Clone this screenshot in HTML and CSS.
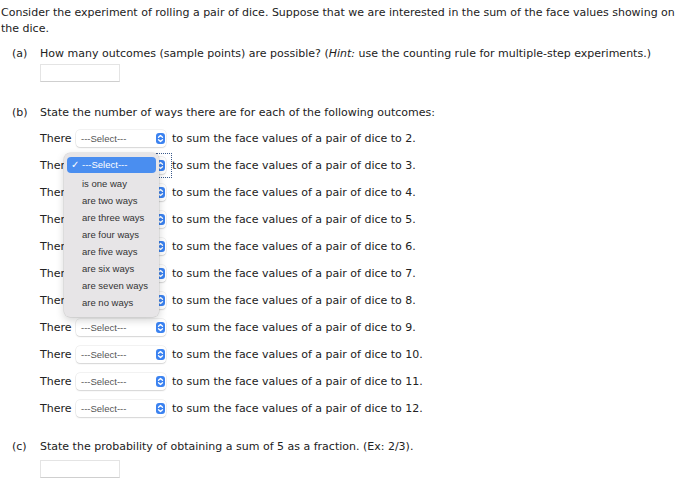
FILE: index.html
```html
<!DOCTYPE html>
<html>
<head>
<meta charset="utf-8">
<link rel="stylesheet" href="styles.css">
</head>
<body>
<div class="page">
  <p class="intro">Consider the experiment of rolling a pair of dice. Suppose that we are interested in the sum of the face values showing on the dice.</p>

  <div class="part part-a">
    <span class="label">(a)</span>
    <div class="body">
      <p class="q">How many outcomes (sample points) are possible? (<i>Hint:</i> use the counting rule for multiple-step experiments.)</p>
      <div class="answer"></div>
    </div>
  </div>

  <div class="part part-b">
    <span class="label">(b)</span>
    <div class="body">
      <p class="q">State the number of ways there are for each of the following outcomes:</p>
      <div class="rows">
        <div class="row"><span class="there">There</span><span class="select"><span class="sel-text">---Select---</span><span class="stepper"><svg viewBox="0 0 9 11" width="9" height="11"><path d="M2.5 4.2 4.5 2.4 6.5 4.2M2.5 6.8 4.5 8.6 6.5 6.8" fill="none" stroke="#fff" stroke-width="1.3" stroke-linecap="round" stroke-linejoin="round"/></svg></span></span><span class="txt">to sum the face values of a pair of dice to 2.</span></div>
        <div class="row"><span class="there">There</span><span class="select focused"><span class="sel-text">---Select---</span><span class="stepper"><svg viewBox="0 0 9 11" width="9" height="11"><path d="M2.5 4.2 4.5 2.4 6.5 4.2M2.5 6.8 4.5 8.6 6.5 6.8" fill="none" stroke="#fff" stroke-width="1.3" stroke-linecap="round" stroke-linejoin="round"/></svg></span><span class="focus-ring"></span>
          <span class="menu">
            <span class="item active"><span class="check">✓</span>---Select---</span>
            <span class="item">is one way</span>
            <span class="item">are two ways</span>
            <span class="item">are three ways</span>
            <span class="item">are four ways</span>
            <span class="item">are five ways</span>
            <span class="item">are six ways</span>
            <span class="item">are seven ways</span>
            <span class="item">are no ways</span>
          </span></span><span class="txt">to sum the face values of a pair of dice to 3.</span></div>
        <div class="row"><span class="there">There</span><span class="select"><span class="sel-text">---Select---</span><span class="stepper"><svg viewBox="0 0 9 11" width="9" height="11"><path d="M2.5 4.2 4.5 2.4 6.5 4.2M2.5 6.8 4.5 8.6 6.5 6.8" fill="none" stroke="#fff" stroke-width="1.3" stroke-linecap="round" stroke-linejoin="round"/></svg></span></span><span class="txt">to sum the face values of a pair of dice to 4.</span></div>
        <div class="row"><span class="there">There</span><span class="select"><span class="sel-text">---Select---</span><span class="stepper"><svg viewBox="0 0 9 11" width="9" height="11"><path d="M2.5 4.2 4.5 2.4 6.5 4.2M2.5 6.8 4.5 8.6 6.5 6.8" fill="none" stroke="#fff" stroke-width="1.3" stroke-linecap="round" stroke-linejoin="round"/></svg></span></span><span class="txt">to sum the face values of a pair of dice to 5.</span></div>
        <div class="row"><span class="there">There</span><span class="select"><span class="sel-text">---Select---</span><span class="stepper"><svg viewBox="0 0 9 11" width="9" height="11"><path d="M2.5 4.2 4.5 2.4 6.5 4.2M2.5 6.8 4.5 8.6 6.5 6.8" fill="none" stroke="#fff" stroke-width="1.3" stroke-linecap="round" stroke-linejoin="round"/></svg></span></span><span class="txt">to sum the face values of a pair of dice to 6.</span></div>
        <div class="row"><span class="there">There</span><span class="select"><span class="sel-text">---Select---</span><span class="stepper"><svg viewBox="0 0 9 11" width="9" height="11"><path d="M2.5 4.2 4.5 2.4 6.5 4.2M2.5 6.8 4.5 8.6 6.5 6.8" fill="none" stroke="#fff" stroke-width="1.3" stroke-linecap="round" stroke-linejoin="round"/></svg></span></span><span class="txt">to sum the face values of a pair of dice to 7.</span></div>
        <div class="row"><span class="there">There</span><span class="select"><span class="sel-text">---Select---</span><span class="stepper"><svg viewBox="0 0 9 11" width="9" height="11"><path d="M2.5 4.2 4.5 2.4 6.5 4.2M2.5 6.8 4.5 8.6 6.5 6.8" fill="none" stroke="#fff" stroke-width="1.3" stroke-linecap="round" stroke-linejoin="round"/></svg></span></span><span class="txt">to sum the face values of a pair of dice to 8.</span></div>
        <div class="row"><span class="there">There</span><span class="select"><span class="sel-text">---Select---</span><span class="stepper"><svg viewBox="0 0 9 11" width="9" height="11"><path d="M2.5 4.2 4.5 2.4 6.5 4.2M2.5 6.8 4.5 8.6 6.5 6.8" fill="none" stroke="#fff" stroke-width="1.3" stroke-linecap="round" stroke-linejoin="round"/></svg></span></span><span class="txt">to sum the face values of a pair of dice to 9.</span></div>
        <div class="row"><span class="there">There</span><span class="select"><span class="sel-text">---Select---</span><span class="stepper"><svg viewBox="0 0 9 11" width="9" height="11"><path d="M2.5 4.2 4.5 2.4 6.5 4.2M2.5 6.8 4.5 8.6 6.5 6.8" fill="none" stroke="#fff" stroke-width="1.3" stroke-linecap="round" stroke-linejoin="round"/></svg></span></span><span class="txt">to sum the face values of a pair of dice to 10.</span></div>
        <div class="row"><span class="there">There</span><span class="select"><span class="sel-text">---Select---</span><span class="stepper"><svg viewBox="0 0 9 11" width="9" height="11"><path d="M2.5 4.2 4.5 2.4 6.5 4.2M2.5 6.8 4.5 8.6 6.5 6.8" fill="none" stroke="#fff" stroke-width="1.3" stroke-linecap="round" stroke-linejoin="round"/></svg></span></span><span class="txt">to sum the face values of a pair of dice to 11.</span></div>
        <div class="row"><span class="there">There</span><span class="select"><span class="sel-text">---Select---</span><span class="stepper"><svg viewBox="0 0 9 11" width="9" height="11"><path d="M2.5 4.2 4.5 2.4 6.5 4.2M2.5 6.8 4.5 8.6 6.5 6.8" fill="none" stroke="#fff" stroke-width="1.3" stroke-linecap="round" stroke-linejoin="round"/></svg></span></span><span class="txt">to sum the face values of a pair of dice to 12.</span></div>
      </div>
    </div>
  </div>

  <div class="part part-c">
    <span class="label">(c)</span>
    <div class="body">
      <p class="q">State the probability of obtaining a sum of 5 as a fraction. (Ex: 2/3).</p>
      <div class="answer"></div>
    </div>
  </div>
</div>
</body>
</html>
```

FILE: styles.css
```css
html, body {
  margin: 0;
  padding: 0;
  background: #fff;
}
body {
  font-family: "DejaVu Sans", Verdana, sans-serif;
  font-size: 11px;
  color: #222;
}
.page {
  padding: 5px 12px 0 1px;
}
p {
  margin: 0;
}
.intro {
  line-height: 16px;
}
.part {
  display: flex;
  align-items: flex-start;
}
.label {
  width: 28px;
  padding-left: 11px;
  flex: none;
  line-height: 16px;
}
.body {
  flex: 1;
}
.q {
  line-height: 16px;
}
.part-a {
  margin-top: 9px;
}
.answer {
  width: 78px;
  height: 16px;
  border: 1px solid #e4e4e4;
  border-bottom-color: #cfcfcf;
  margin-top: 2px;
  background: #fff;
}
.part-b {
  margin-top: 23px;
}
.rows {
  margin-top: 9px;
  display: flex;
  flex-direction: column;
  gap: 10px;
}
.row {
  display: flex;
  align-items: center;
  height: 17px;
}
.there {
  width: 36px;
  flex: none;
}
.select {
  position: relative;
  width: 90px;
  height: 17px;
  flex: none;
  display: flex;
  align-items: center;
  justify-content: space-between;
  box-sizing: border-box;
  background: #fff;
  border-radius: 4px;
  box-shadow: 0 0 0 0.5px rgba(0,0,0,0.10), 0 1px 1.5px rgba(0,0,0,0.12);
  padding: 0 1px 0 5px;
  margin-right: 6px;
}
.sel-text {
  font-family: "Liberation Sans", Arial, sans-serif;
  font-size: 9.5px;
  color: #555;
}
.stepper {
  width: 9px;
  height: 11px;
  background: #3b82f0;
  border-radius: 3px;
  display: flex;
}
.focus-ring {
  position: absolute;
  left: 80px;
  top: -4px;
  width: 16px;
  height: 25px;
  border: 1.5px dotted #3a5a8c;
  box-sizing: border-box;
}
.menu {
  position: absolute;
  left: -12px;
  top: -4px;
  width: 95px;
  height: 164px;
  box-sizing: border-box;
  background: #e7e5e7;
  border-radius: 6px;
  box-shadow: 0 0 0 0.5px rgba(0,0,0,0.12), 0 3px 8px rgba(0,0,0,0.18);
  padding: 4px 3px;
  display: flex;
  flex-direction: column;
  z-index: 5;
}
.item {
  font-family: "Liberation Sans", Arial, sans-serif;
  font-size: 9.5px;
  color: #333;
  height: 17px;
  line-height: 17px;
  padding-left: 15px;
  border-radius: 4px;
  white-space: nowrap;
  position: relative;
}
.item.active {
  background: #4a8ef0;
  color: #fff;
  height: 16px;
  line-height: 16px;
  margin-bottom: 2px;
}
.check {
  position: absolute;
  left: 4px;
  top: 0;
}
.txt {
  white-space: nowrap;
}
.part-c {
  margin-top: 22px;
}
.part-c .answer {
  margin-top: 5px;
}
```
